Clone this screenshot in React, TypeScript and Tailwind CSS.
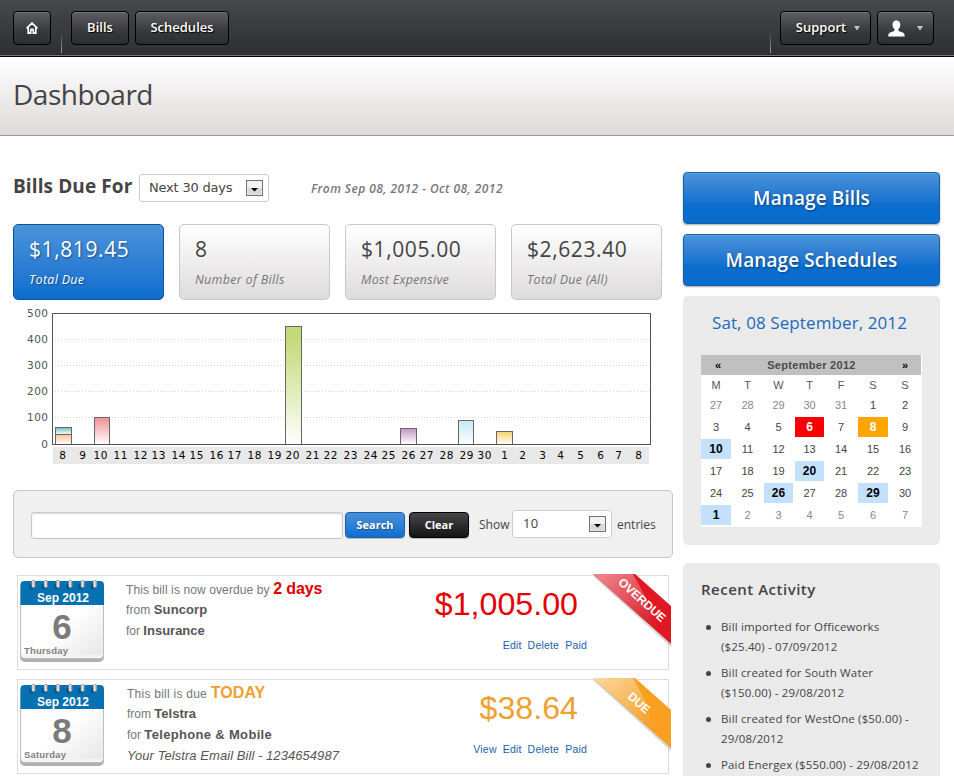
import type { ReactNode } from 'react';
import clsx from 'clsx';

const TREBUCHET = "font-['Open_Sans',sans-serif]";
const VERDANA = "font-['DejaVu_Sans',sans-serif]";
const ARIAL = "font-['Liberation_Sans',sans-serif]";

const STATS = [
    { value: '$1,819.45', label: 'Total Due', active: true },
    { value: '8', label: 'Number of Bills' },
    { value: '$1,005.00', label: 'Most Expensive' },
    { value: '$2,623.40', label: 'Total Due (All)' },
];

const DAY_LABELS: [string, number][] = [
    ['8', 62], ['9', 82], ['10', 100], ['11', 120], ['12', 140], ['13', 158], ['14', 178], ['15', 196],
    ['16', 216], ['17', 234], ['18', 254], ['19', 274], ['20', 292], ['21', 312], ['22', 330], ['23', 350],
    ['24', 370], ['25', 388], ['26', 408], ['27', 426], ['28', 446], ['29', 466], ['30', 484], ['1', 504],
    ['2', 522], ['3', 542], ['4', 560], ['5', 580], ['6', 600], ['7', 618], ['8', 638],
];

const BARS = [
    { id: 'orange', x: 55, y: 434, w: 16, h: 10, color: '#fbc9a0' },
    { id: 'teal', x: 55, y: 427, w: 16, h: 7, color: '#7cc4c4' },
    { id: 'pink', x: 94, y: 417, w: 15, h: 27, color: '#f09a9c' },
    { id: 'green', x: 285, y: 326, w: 16, h: 118, color: '#c3da79' },
    { id: 'purple', x: 400, y: 428, w: 16, h: 16, color: '#c9a0cb' },
    { id: 'blue', x: 458, y: 420, w: 15, h: 24, color: '#cdeaf8' },
    { id: 'yellow', x: 496, y: 431, w: 16, h: 13, color: '#fbd678' },
];

const WEEKS = [
    [27, 28, 29, 30, 31, 1, 2],
    [3, 4, 5, 6, 7, 8, 9],
    [10, 11, 12, 13, 14, 15, 16],
    [17, 18, 19, 20, 21, 22, 23],
    [24, 25, 26, 27, 28, 29, 30],
    [1, 2, 3, 4, 5, 6, 7],
];

const ACTIVITY = [
    ['Bill imported for Officeworks', '($25.40) - 07/09/2012'],
    ['Bill created for South Water', '($150.00) - 29/08/2012'],
    ['Bill created for WestOne ($50.00) -', '29/08/2012'],
    ['Paid Energex ($550.00) - 29/08/2012'],
];

function NavButton({ className, children }: { className: string; children: ReactNode }) {
    return (
        <button
            className={clsx(
                'flex h-[34px] items-center justify-center rounded-[4px] border border-black bg-linear-to-b from-[#5d5e61] via-[#38393c] via-60% to-[#2c2d30] text-[13px] font-semibold text-white shadow-[inset_0_1px_0_#77787a] text-shadow-[1px_1px_1px_#000]',
                className
            )}
        >
            {children}
        </button>
    );
}

function Caret() {
    return (
        <svg width="6" height="5" viewBox="0 0 6 5">
            <path d="M0 0h6L3 4.5z" fill="#c4c4c4" />
        </svg>
    );
}

function NavDivider() {
    return <div className="mt-[21px] h-[21px] w-px bg-linear-to-b from-[#3a3b3e] to-[#a0a0a0]" />;
}

function SelectBox({ className, children }: { className: string; children: ReactNode }) {
    return (
        <div
            className={clsx(
                'flex h-[28px] items-center justify-between rounded-[3px] border border-[#ccc] bg-white pr-[5px] text-[#444]',
                className
            )}
        >
            <span>{children}</span>
            <svg width="17" height="16" viewBox="0 0 17 16">
                <rect x=".5" y=".5" width="16" height="15" fill="#f2f2f2" stroke="#707070" />
                <rect x="1.5" y="8" width="14" height="6.5" fill="#d8d8d8" />
                <path d="M5 8h7L8.5 11.5z" fill="#000" />
            </svg>
        </div>
    );
}

function Header() {
    return (
        <header className={clsx(TREBUCHET, 'flex h-[57px] justify-between border-b border-black bg-linear-to-b from-[#47484b] to-[#2d2f32] pt-[11px] pr-5 pl-[13px] shadow-[inset_0_-1px_0_#77797b]')}>
            <div className="flex">
                <NavButton className="w-[38px]">
                    <svg width="12" height="12" viewBox="0 0 12 12" fill="none" stroke="#fff" strokeWidth="1.7">
                        <path d="M.6 6.4L6 1l5.4 5.4M2.2 5.500v5.600h2.500V8.200M9.800 5.500v5.600H7.300V8.200M4.700 8.600q0-1.400 1.300-1.400t1.300 1.400" />
                    </svg>
                </NavButton>
                <div className="ml-[10px] w-[10px]"><NavDivider /></div>
                <NavButton className="w-[58px]">Bills</NavButton>
                <NavButton className="ml-[6px] w-[94px]">Schedules</NavButton>
            </div>
            <div className="flex">
                <div className="w-[10px]"><NavDivider /></div>
                <NavButton className="w-[91px] gap-[8px] pl-[5px]">Support <Caret /></NavButton>
                <NavButton className="ml-[6px] w-[57px] gap-3">
                    <svg width="17" height="17" viewBox="0 0 17 17" fill="#fff">
                        <path d="M8.3.4c2.6 0 4 1.7 4 4.4 0 2-.9 3.4-1.9 4.5-.3.9 0 1.6.7 1.9l3.6 1.4c1.3.5 2 1.6 2 3.9H.2c0-2.3.7-3.4 2-3.9l3.5-1.4c.8-.3 1.1-1 .8-1.9-1.2-1.1-2-2.500-2-4.500 0-2.700 1.400-4.400 3.800-4.400z" />
                    </svg>
                    <Caret />
                </NavButton>
            </div>
        </header>
    );
}

function BillsChart() {
    return (
        <svg className={clsx(VERDANA, 'mt-1 block')} width="659" height="164" viewBox="13 304 659 164" fontSize="10.5">
            <defs>
                {BARS.map((bar) => (
                    <linearGradient key={bar.id} id={bar.id} x1="0" y1="0" x2="0" y2="1">
                        <stop offset="0.1" stopColor={bar.color} />
                        <stop offset="1" stopColor="#fff" />
                    </linearGradient>
                ))}
            </defs>
            {[500, 400, 300, 200, 100, 0].map((tick, i) => (
                <text key={tick} x="48" y={317 + i * 26.1} textAnchor="end" textLength={tick ? 21 : 7} fill="#545454">{tick}</text>
            ))}
            {[339, 365, 391, 417].map((y) => (
                <path key={y} d={`M55 ${y}.5H650`} stroke="#d4d4d4" strokeDasharray="1 2" />
            ))}
            <rect x="52.5" y="313.5" width="598" height="131" fill="none" stroke="#545454" />
            {BARS.map((bar) => (
                <rect key={bar.id} x={bar.x + 0.5} y={bar.y + 0.5} width={bar.w} height={bar.h} fill={`url(#${bar.id})`} stroke="#666" />
            ))}
            <path d="M52 444.5H651" stroke="#545454" />
            <rect x="53" y="447" width="596" height="17" fill="#e8e8e8" />
            {DAY_LABELS.map(([label, x], i) => (
                <text key={i} x={x + 0.5} y="459" textAnchor="middle" textLength={label.length > 1 ? 14 : 7} fill="#000">{label}</text>
            ))}
        </svg>
    );
}

function SearchPanel() {
    return (
        <section className={clsx(TREBUCHET, 'mt-[22px] flex h-[68px] w-[660px] rounded-[5px] border border-[#c8c8c8] bg-[#f0f0f0] pt-[19px] pl-[17px] text-[#444]')}>
            <input className="mt-[2px] h-[27px] w-[312px] rounded-[3px] border border-[#c8c8c8] bg-white shadow-[inset_0_1px_2px_#ddd]" />
            <button className="mt-[2px] ml-[2px] h-[26px] w-[60px] rounded-[4px] border border-[#1a5fa8] bg-linear-to-b from-[#4691d9] to-[#0b6fd0] text-[11px] font-bold text-white shadow-[0_1px_1px_#bbb] text-shadow-[1px_1px_1px_#0005]">Search</button>
            <button className="mt-[2px] ml-1 h-[26px] w-[60px] rounded-[4px] border border-black bg-linear-to-b from-[#46474a] to-[#151515] text-[11px] font-bold text-white shadow-[0_1px_1px_#bbb]">Clear</button>
            <span className="ml-[10px] w-[33px] text-[12px] leading-[29px]">Show</span>
            <SelectBox className="w-[100px] pl-[10px] text-[13px] tracking-[0.2px]">10</SelectBox>
            <span className="ml-[5px] text-[12px] leading-[29px]">entries</span>
        </section>
    );
}

function DateTile({ day, weekday, id }: { day: string; weekday: string; id: string }) {
    return (
        <svg width="86" height="84" viewBox="0 0 86 84" className="shrink-0">
            <defs>
                <linearGradient id={id} x1="0" y1="0" x2="1" y2="1">
                    <stop offset=".55" stopColor="#fff" />
                    <stop offset="1" stopColor="#e6e6e6" />
                </linearGradient>
            </defs>
            <rect x="0" y="6" width="84" height="77" rx="5" fill="#b0b0b0" />
            <rect x=".5" y="4" width="83" height="75.5" rx="4" fill="#f4f4f4" stroke="#bdbdbd" />
            <rect x="1.5" y="4" width="81" height="72" rx="4" fill={`url(#${id})`} />
            <path d="M.5 26V6q0-4 4-4h75.5q4 0 4 4v20z" fill="#0571b0" />
            {[13, 25.3, 37.6, 49.9, 62.2, 74.5].map((x) => (
                <g key={x}>
                    <circle cx={x - 1} cy="7.5" r="2.8" fill="#075586" />
                    <rect x={x - 1.5} y="1" width="4" height="8" rx="2" fill="#9d9d9d" />
                    <rect x={x - 0.5} y="2" width="1.5" height="6" fill="#f2f2f2" />
                </g>
            ))}
            <text x="43" y="22.5" textAnchor="middle" fontSize="12" fontWeight="bold" fill="#fff" textLength="52">Sep 2012</text>
            <text x="42" y="60" textAnchor="middle" fontSize="35" fontWeight="bold" fill="#7b7b7b">{day}</text>
            <text x="4" y="74.5" fontSize="9.5" fontWeight="bold" fill="#808080" textLength={weekday === 'Thursday' ? 44 : 42}>{weekday}</text>
        </svg>
    );
}

function Ribbon({ label, from, mid, to, id }: { label: string; from: string; mid: string; to: string; id: string }) {
    return (
        <svg className="absolute -top-[2px] -right-[3px]" width="79" height="72" viewBox="0 0 79 72">
            <defs>
                <linearGradient id={id} x1="0" y1="0" x2="1" y2="1">
                    <stop offset="0" stopColor={from} />
                    <stop offset="1" stopColor={mid} />
                </linearGradient>
            </defs>
            <path d="M1 2L79 73V69L5 1z" fill="#b8b8b8" opacity=".6" />
            <path d="M1 0H43L79 32V70z" fill={to} />
            <path d="M1 0H41L53 22L63 55z" fill={`url(#${id})`} />
            <text
                transform={label === 'DUE' ? 'translate(47 25) rotate(42)' : 'translate(50 26) rotate(42)'}
                textAnchor="middle"
                y="4"
                fontSize="12"
                fontWeight="bold"
                fill="#fff"
                textLength={label === 'DUE' ? 25 : 59}
            >
                {label}
            </text>
        </svg>
    );
}

function BillLinks({ links }: { links: string[] }) {
    return (
        <div className="-mr-[9px] mt-[16px] flex justify-end gap-[6px] text-[10.5px] leading-[14px] tracking-[0.2px] text-[#1a62ad]">
            {links.map((link) => <a key={link}>{link}</a>)}
        </div>
    );
}

function BillList() {
    return (
        <section className={clsx(ARIAL, 'mt-[17px] ml-1 w-[652px] space-y-[9px] text-[12px] leading-[21px] text-[#777]')}>
            <article className="relative flex h-[95px] border border-[#ddd] pt-[3px] pl-[2px]">
                <DateTile id="tile-thu" day="6" weekday="Thursday" />
                <div className="-mt-px ml-[20px] w-[265px] whitespace-nowrap">
                    <div className="h-[21px] tracking-[0.11px]">This bill is now overdue by <b className="text-[16px] tracking-[-0.1px] text-[#e00000]">2 days</b></div>
                    <div className="h-[21px] tracking-[0.1px]">from <b className="text-[13px] text-[#555]">Suncorp</b></div>
                    <div className="h-[21px]">for <b className="text-[13px] text-[#555]">Insurance</b></div>
                </div>
                <div className="w-[187px] text-right">
                    <div className="pt-[7px] text-[32.2px] leading-[36px] text-[#e60000]">$1,005.00</div>
                    <BillLinks links={['Edit', 'Delete', 'Paid']} />
                </div>
                <Ribbon id="ribbon-red" label="OVERDUE" from="#f08a90" mid="#d61824" to="#df1823" />
            </article>
            <article className="relative flex h-[95px] border border-[#ddd] pt-[3px] pl-[2px]">
                <DateTile id="tile-sat" day="8" weekday="Saturday" />
                <div className="-mt-px ml-[21px] w-[264px] whitespace-nowrap">
                    <div className="h-[21px] tracking-[0.25px]">This bill is due <b className="text-[16px] tracking-[0.1px] text-[#f0a030]">TODAY</b></div>
                    <div className="h-[21px]">from <b className="text-[13px] text-[#555]">Telstra</b></div>
                    <div className="h-[21px]">for <b className="text-[13px] tracking-[0.33px] text-[#555]">Telephone &amp; Mobile</b></div>
                    <div className="text-[13px] tracking-[0.06px] text-[#555] italic">Your Telstra Email Bill - 1234654987</div>
                </div>
                <div className="w-[187px] text-right">
                    <div className="pt-[7px] text-[32.2px] leading-[36px] text-[#f0a030]">$38.64</div>
                    <BillLinks links={['View', 'Edit', 'Delete', 'Paid']} />
                </div>
                <Ribbon id="ribbon-orange" label="DUE" from="#fbd9a0" mid="#f39a1c" to="#fa9f22" />
            </article>
        </section>
    );
}

function dayClass(week: number, day: number) {
    if (week === 1 && day === 6) return 'bg-[#f80000] font-bold text-[12px] text-white';
    if (week === 1 && day === 8) return 'bg-[#ffa500] font-bold text-[12px] text-white';
    if ((week === 2 && day === 10) || (week === 3 && day === 20) || (week === 4 && (day === 26 || day === 29)) || (week === 5 && day === 1)) {
        return 'bg-[#c3e1fd] font-bold text-[12px] text-black';
    }
    if ((week === 0 && day > 20) || week === 5) return 'text-[#888]';
    return 'text-[#444]';
}

function CalendarPanel() {
    return (
        <section className="mt-[10px] h-[249px] rounded-[5px] bg-[#eaeaea] pt-[15px] pl-[18px]">
            <h3 className={clsx(TREBUCHET, 'w-[217px] text-center text-[17px] leading-[24px] tracking-[0.1px] text-[#1a6bbd]')}>Sat, 08 September, 2012</h3>
            <div className={clsx(ARIAL, 'mt-[20px] h-[172px] w-[221px] bg-white text-center text-[11px] leading-[20px]')}>
                <div className="flex h-5 w-[220px] justify-between bg-[#c0c0c0] pr-[13px] pl-[14px] font-bold text-[#4a4a4a]">
                    <span className="text-black">«</span>
                    <span className="tracking-[0.3px]">September 2012</span>
                    <span className="text-black">»</span>
                </div>
                <div className="grid grid-cols-[30px_29px_29px_29px_30px_30px_30px] gap-x-[2px] text-[#555]">
                    {['M', 'T', 'W', 'T', 'F', 'S', 'S'].map((name, i) => <span key={i}>{name}</span>)}
                </div>
                <div className="grid grid-cols-[30px_29px_29px_29px_30px_30px_30px] gap-[2px]">
                    {WEEKS.map((week, w) => week.map((day) => (
                        <span key={`${w}-${day}`} className={clsx('h-5', dayClass(w, day))}>{day}</span>
                    )))}
                </div>
            </div>
        </section>
    );
}

function Sidebar() {
    return (
        <aside className={clsx(TREBUCHET, 'w-[257px]')}>
            <div className="space-y-[10px]">
                {['Manage Bills', 'Manage Schedules'].map((label) => (
                    <button
                        key={label}
                        className="block h-[52px] w-full rounded-[4px] border border-[#1560ab] bg-linear-to-b from-[#4a93d9] to-[#0a6dce] to-65% text-[19px] font-semibold tracking-[0.1px] text-white shadow-[0_1px_2px_#aaa,inset_0_1px_0_#5fa3e0] text-shadow-[1px_1px_2px_#0006]"
                    >
                        {label}
                    </button>
                ))}
            </div>
            <CalendarPanel />
            <section className="mt-[18px] h-[240px] rounded-[5px] bg-[#eaeaea] pt-[15px] pl-[18px] text-[#444]">
                <h3 className="text-[15px] leading-[22px] font-semibold tracking-[0.5px]">Recent Activity</h3>
                <ul className="mt-[17px] space-y-[6px] text-[11.5px] leading-[20px] tracking-[0.15px]">
                    {ACTIVITY.map((lines) => (
                        <li key={lines[0]} className="flex whitespace-nowrap">
                            <span className="mt-[8px] mr-[10px] ml-[5px] size-[5px] rounded-full bg-[#444]" />
                            <div>{lines.map((line) => <div key={line}>{line}</div>)}</div>
                        </li>
                    ))}
                </ul>
            </section>
        </aside>
    );
}

export default function App() {
    return (
        <div className="h-[776px] w-[954px] overflow-hidden bg-white">
            <Header />
            <div className="h-[79px] border-b border-[#999] bg-linear-to-b from-white to-[#dedad9] pl-[13px]">
                <h1 className={clsx(TREBUCHET, 'text-[28px] leading-[75px] tracking-[-0.5px] text-[#444]')}>Dashboard</h1>
            </div>
            <main className="flex gap-[11px] pt-9 pl-[13px]">
                <div className="w-[659px]">
                    <div className={clsx(TREBUCHET, 'flex h-[30px] items-start text-[#444]')}>
                        <h2 className="w-[126px] text-[19px] leading-[29px] font-bold tracking-[0.1px] whitespace-nowrap">Bills Due For</h2>
                        <SelectBox className={clsx(VERDANA, 'mt-[2px] w-[130px] pl-[9px] text-[13px] tracking-[-0.2px]')}>Next 30 days</SelectBox>
                        <span className="ml-[42px] text-[12px] leading-[34px] font-semibold tracking-[0.43px] text-[#777] italic">From Sep 08, 2012 - Oct 08, 2012</span>
                    </div>
                    <div className={clsx(TREBUCHET, 'mt-[22px] flex gap-[15px]')}>
                        {STATS.map(({ value, label, active }) => (
                            <div
                                key={label}
                                className={clsx(
                                    'h-[76px] w-[151px] rounded-[5px] border bg-linear-to-b pt-[10px] pl-[15px]',
                                    active
                                        ? 'border-[#0d5399] from-[#4a93d9] to-[#0a6dce] text-white text-shadow-[1px_1px_2px_#0006]'
                                        : 'border-[#c8c8c8] from-white to-[#dedbdb] text-[#444]'
                                )}
                            >
                                <div className="text-[21px] leading-[29px] tracking-[0.6px]">{value}</div>
                                <div className={clsx('mt-[7px] text-[12.5px] leading-[18px] tracking-[0.3px] italic', !active && 'text-[#777]')}>{label}</div>
                            </div>
                        ))}
                    </div>
                    <BillsChart />
                    <SearchPanel />
                    <BillList />
                </div>
                <Sidebar />
            </main>
        </div>
    );
}
